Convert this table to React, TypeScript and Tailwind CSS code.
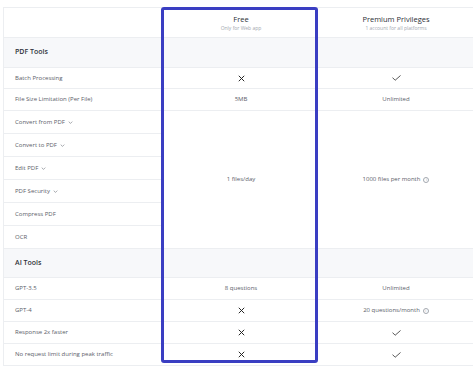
import { ReactNode } from "react";

const FONT = { fontFamily: '"Open Sans", "Noto Sans", sans-serif' };

function Cross() {
  return (
    <svg width="7" height="7" viewBox="0 0 10 10" fill="none" stroke="#222" strokeWidth="1.4" strokeLinecap="round">
      <path d="M1.5 1.5l7 7M8.5 1.5l-7 7" />
    </svg>
  );
}

function Check() {
  return (
    <svg width="9" height="6" viewBox="0 0 12 8" fill="none" stroke="#333" strokeWidth="1.1" strokeLinecap="round" strokeLinejoin="round">
      <path d="M1 3.8l3.2 3.2L11 1" />
    </svg>
  );
}

function Chevron() {
  return (
    <svg width="5" height="3" viewBox="0 0 8 5" fill="none" stroke="#6b7079" strokeWidth="1" className="ml-[3px]">
      <path d="M1 1l3 3 3-3" />
    </svg>
  );
}

function Info() {
  return (
    <span className="ml-[3px] inline-flex items-center justify-center w-[6px] h-[6px] rounded-full border-[0.8px] border-[#a3a8b0] text-[4px] leading-none text-[#a3a8b0]">
      i
    </span>
  );
}

function Label({ children, chevron }: { children: ReactNode; chevron?: boolean }) {
  return (
    <div className="flex items-center pl-[11px] border-b border-[#eceef1] text-[6px] text-[#5b6069]">
      {children}
      {chevron && <Chevron />}
    </div>
  );
}

function Cell({ children, className = "" }: { children?: ReactNode; className?: string }) {
  return (
    <div className={`flex items-center justify-center border-b border-[#eceef1] text-[6px] text-[#5b6069] ${className}`}>
      {children}
    </div>
  );
}

function Section({ title }: { title: string }) {
  return (
    <div className="col-span-3 flex items-center pl-[11px] bg-[#f7f8fa] border-b border-[#eceef1] text-[7px] font-semibold text-[#2f333a]">
      {title}
    </div>
  );
}

export default function App() {
  return (
    <div className="w-[474px] h-[367px] bg-white overflow-hidden pt-[7px] pl-[3px]" style={FONT}>
      <div className="relative w-[470px]">
        <div className="grid grid-cols-[159px_156px_1fr] grid-rows-[30px_30px_21px_22px_repeat(6,23px)_29px_repeat(4,22px)] border-t border-l border-[#eceef1]">
          <div className="border-b border-[#eceef1]" />
          <div className="flex flex-col items-center justify-center border-b border-[#eceef1]">
            <div className="text-[7.5px] font-medium text-[#2b2f36] leading-[10px]">Free</div>
            <div className="text-[5px] text-[#a3a8b0] leading-[8px]">Only for Web app</div>
          </div>
          <div className="flex flex-col items-center justify-center border-b border-[#eceef1]">
            <div className="text-[7.5px] font-medium text-[#2b2f36] leading-[10px]">Premium Privileges</div>
            <div className="text-[5px] text-[#a3a8b0] leading-[8px]">1 account for all platforms</div>
          </div>

          <Section title="PDF Tools" />

          <Label>Batch Processing</Label>
          <Cell><Cross /></Cell>
          <Cell><Check /></Cell>

          <Label>File Size Limitation (Per File)</Label>
          <Cell>5MB</Cell>
          <Cell>Unlimited</Cell>

          <Label chevron>Convert from PDF</Label>
          <Cell className="row-span-6">1 files/day</Cell>
          <Cell className="row-span-6">1000 files per month <Info /></Cell>
          <Label chevron>Convert to PDF</Label>
          <Label chevron>Edit PDF</Label>
          <Label chevron>PDF Security</Label>
          <Label>Compress PDF</Label>
          <Label>OCR</Label>

          <Section title="AI Tools" />

          <Label>GPT-3.5</Label>
          <Cell>8 questions</Cell>
          <Cell>Unlimited</Cell>

          <Label>GPT-4</Label>
          <Cell><Cross /></Cell>
          <Cell>20 questions/month <Info /></Cell>

          <Label>Response 2x faster</Label>
          <Cell><Cross /></Cell>
          <Cell><Check /></Cell>

          <Label>No request limit during peak traffic</Label>
          <Cell><Cross /></Cell>
          <Cell><Check /></Cell>
        </div>
        {/* highlight frame over the Free column */}
        <div className="absolute left-[158px] top-0 w-[157px] h-[356px] border-[3px] border-[#3a3ec2] rounded-[3px] pointer-events-none" />
      </div>
    </div>
  );
}
